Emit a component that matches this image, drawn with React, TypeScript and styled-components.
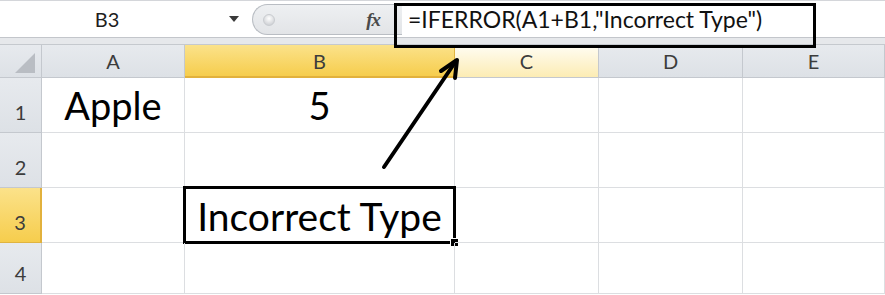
import styled, { createGlobalStyle, css } from "styled-components";

const GlobalStyle = createGlobalStyle`
  html, body {
    margin: 0;
    padding: 0;
    background: #ffffff;
  }
  body {
    font-family: "Lato", "Open Sans", "Liberation Sans", sans-serif;
  }
`;

const Sheet = styled.div`
  position: relative;
  width: 885px;
  height: 295px;
  overflow: hidden;
  background: #ffffff;
  border-top: 1px solid #d4d6da;
  box-sizing: border-box;
`;

// START formula bar ------------------------------------
const FormulaBar = styled.div`
  display: flex;
  align-items: center;
  height: 36px;
  background: #ffffff;
  border-bottom: 1px solid #c3c6cb;
`;

const NameBox = styled.div`
  display: flex;
  align-items: center;
  width: 252px;
  height: 100%;
  font-size: 20px;
  color: #1e1e1e;
`;

const NameText = styled.span`
  flex: 1;
  text-align: center;
  padding-right: 15px;
`;

const Dropdown = styled.span`
  width: 0;
  height: 0;
  margin-right: 13px;
  border-left: 5px solid transparent;
  border-right: 5px solid transparent;
  border-top: 6px solid #3a3a3a;
`;

const FxPill = styled.div`
  display: flex;
  align-items: center;
  justify-content: space-between;
  width: 150px;
  height: 31px;
  margin-top: 1px;
  padding: 0 22px 0 10px;
  box-sizing: border-box;
  background: linear-gradient(#eef0f2, #e2e4e7);
  border: 1px solid #b9bdc3;
  border-right: none;
  border-radius: 16px 0 0 16px;
`;

const Knob = styled.span`
  width: 10px;
  height: 10px;
  border-radius: 50%;
  background: radial-gradient(circle at 50% 35%, #ffffff, #c2c5ca);
  border: 1px solid #c9ccd0;
`;

const FxLabel = styled.span`
  font-family: "Liberation Serif", serif;
  font-style: italic;
  font-weight: bold;
  font-size: 19px;
  color: #4a4a4a;
  letter-spacing: -1px;
`;

const FormulaField = styled.div`
  position: relative;
  flex: 1;
  height: 100%;
  display: flex;
  align-items: center;
  padding-left: 6px;
  font-size: 23px;
  color: #111111;
  background: #ffffff;

  &::after {
    content: "";
    position: absolute;
    left: -8px;
    top: 2px;
    width: 422px;
    height: 45px;
    border: 3px solid #000000;
    box-sizing: border-box;
    pointer-events: none;
  }
`;
// END formula bar ------------------------------------

const Spacer = styled.div`
  height: 6px;
  background: #e6e8eb;
  border-bottom: 1px solid #c5c9ce;
`;

// START grid ------------------------------------
const Grid = styled.div`
  display: grid;
  grid-template-columns: 42px 143px 270px 144px 144px 142px;
  grid-template-rows: 33px 55px 55px 55px 51px;
`;

type HeadState = "normal" | "active" | "hover";

const headBg = {
  normal: css`
    background: linear-gradient(#e7eaee, #dde1e6);
  `,
  active: css`
    background: linear-gradient(#fbe28a, #f6cd4d);
    border-color: #e0b440;
  `,
  hover: css`
    background: linear-gradient(#fffdf4, #fcecb4);
  `,
};

const ColHead = styled.div<{ $state: HeadState }>`
  display: flex;
  align-items: center;
  justify-content: center;
  font-size: 20px;
  color: #3c3c3c;
  border-right: 1px solid #c4c8ce;
  border-bottom: 1px solid #c4c8ce;
  box-sizing: border-box;
  ${(p) => headBg[p.$state]}
  ${(p) =>
    p.$state === "active" &&
    css`
      border-bottom: 2px solid #e2b13c;
    `}
`;

const Corner = styled.div`
  position: relative;
  background: linear-gradient(#e7eaee, #dde1e6);
  border-right: 1px solid #c4c8ce;
  border-bottom: 1px solid #c4c8ce;
  box-sizing: border-box;

  &::after {
    content: "";
    position: absolute;
    right: 6px;
    bottom: 4px;
    width: 0;
    height: 0;
    border-left: 20px solid transparent;
    border-bottom: 20px solid #b9bdc3;
  }
`;

const RowHead = styled.div<{ $state: HeadState }>`
  display: flex;
  align-items: flex-end;
  justify-content: center;
  padding-bottom: 8px;
  font-size: 20px;
  color: #3c3c3c;
  border-right: 1px solid #c4c8ce;
  border-bottom: 1px solid #c4c8ce;
  box-sizing: border-box;
  ${(p) => headBg[p.$state]}
  ${(p) =>
    p.$state === "active" &&
    css`
      border-right: 2px solid #e2b13c;
    `}
`;

const Cell = styled.div<{ $selected?: boolean }>`
  position: relative;
  display: flex;
  align-items: flex-end;
  justify-content: center;
  padding-bottom: 8px;
  font-size: 38px;
  line-height: 1;
  color: #000000;
  border-right: 1px solid #dcdee1;
  border-bottom: 1px solid #dcdee1;
  box-sizing: border-box;
  white-space: nowrap;

  ${(p) =>
    p.$selected &&
    css`
      padding-bottom: 6px;
      font-size: 39px;
      &::before {
        content: "";
        position: absolute;
        left: -2px;
        top: -2px;
        right: -2px;
        bottom: -2px;
        border: 3px solid #000000;
        pointer-events: none;
      }
      &::after {
        content: "";
        position: absolute;
        right: -5px;
        bottom: -5px;
        width: 7px;
        height: 7px;
        background: #000000;
        border: 1px solid #ffffff;
      }
    `}
`;
// END grid ------------------------------------

const Arrow = styled.svg`
  position: absolute;
  left: 0;
  top: 0;
  pointer-events: none;
`;

const columns: { key: string; state: HeadState }[] = [
  { key: "A", state: "normal" },
  { key: "B", state: "active" },
  { key: "C", state: "hover" },
  { key: "D", state: "normal" },
  { key: "E", state: "normal" },
];

const rows: { n: number; values: string[] }[] = [
  { n: 1, values: ["Apple", "5", "", "", ""] },
  { n: 2, values: ["", "", "", "", ""] },
  { n: 3, values: ["", "Incorrect Type", "", "", ""] },
  { n: 4, values: ["", "", "", "", ""] },
];

export default function App() {
  return (
    <>
      <GlobalStyle />
      <Sheet>
        <FormulaBar>
          <NameBox>
            <NameText>B3</NameText>
            <Dropdown />
          </NameBox>
          <FxPill>
            <Knob />
            <FxLabel>fx</FxLabel>
          </FxPill>
          <FormulaField>=IFERROR(A1+B1,"Incorrect Type")</FormulaField>
        </FormulaBar>
        <Spacer />
        <Grid>
          <Corner />
          {columns.map((c) => (
            <ColHead key={c.key} $state={c.state}>
              {c.key}
            </ColHead>
          ))}
          {rows.map((r) => (
            <>
              <RowHead key={`h${r.n}`} $state={r.n === 3 ? "active" : "normal"}>
                {r.n}
              </RowHead>
              {r.values.map((v, i) => (
                <Cell key={`${r.n}-${i}`} $selected={r.n === 3 && i === 1}>
                  {v}
                </Cell>
              ))}
            </>
          ))}
        </Grid>
        <Arrow width="885" height="295">
          <g stroke="#000" strokeWidth="4" strokeLinecap="round" fill="none">
            <line x1="384" y1="166" x2="456" y2="60" />
            <polyline points="441,70 457,59 455,77" strokeLinejoin="round" />
          </g>
        </Arrow>
      </Sheet>
    </>
  );
}
